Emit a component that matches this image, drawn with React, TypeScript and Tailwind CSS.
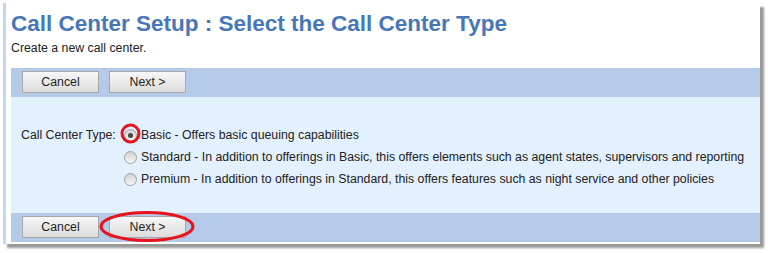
import React from "react";

const font = { fontFamily: '"Liberation Sans", Arial, sans-serif' };

function Btn({ label }: { label: string }) {
  return (
    <button className="w-[77px] h-[22px] border border-[#a7a7a7] bg-gradient-to-b from-[#f7f7f7] to-[#dcdcdc] text-[12.3px] text-[#1e1e1e] leading-none flex items-center justify-center">
      {label}
    </button>
  );
}

function Bar() {
  return (
    <div className="h-[29px] bg-[#b5c9e9] pt-[3px] pl-[11px] flex gap-[10px] items-start">
      <Btn label="Cancel" />
      <Btn label="Next >" />
    </div>
  );
}

function Radio({ checked }: { checked?: boolean }) {
  return (
    <span className="relative w-[13px] h-[13px] rounded-full border border-[#a2a2a2] bg-gradient-to-b from-[#d2d2d2] to-[#f7f7f7] flex items-center justify-center shrink-0">
      {checked && <span className="w-[5px] h-[5px] rounded-full bg-[#444]" />}
    </span>
  );
}

function Option({ checked, text }: { checked?: boolean; text: string }) {
  return (
    <div className="h-[22px] flex items-center">
      <Radio checked={checked} />
      <span className="ml-[4px] text-[12.3px] text-[#222] whitespace-nowrap">{text}</span>
    </div>
  );
}

export default function App() {
  return (
    <div className="w-[768px] h-[253px] bg-white relative overflow-hidden" style={font}>
      <div className="ml-[3px] mt-[3px] w-[757px] border-l-[3px] border-[#c6d6ee] bg-white pl-[5px] pt-[8px] pb-[2px] shadow-[4px_4px_2px_rgba(0,0,0,0.4)]">
        <h1 className="text-[22.5px] leading-[26px] font-bold text-[#4777b6]">
          Call Center Setup : Select the Call Center Type
        </h1>
        <p className="mt-[4px] text-[12.3px] leading-[14px] text-[#222]">Create a new call center.</p>
        <div className="mt-[13px]">
          <Bar />
          <div className="bg-[#e3f0fd] h-[116px] pt-[27px] pl-[10px] flex">
            <div className="w-[103px] h-[22px] flex items-center text-[12.3px] text-[#222]">Call Center Type:</div>
            <div className="flex flex-col">
              <Option checked text="Basic - Offers basic queuing capabilities" />
              <Option text="Standard - In addition to offerings in Basic, this offers elements such as agent states, supervisors and reporting" />
              <Option text="Premium - In addition to offerings in Standard, this offers features such as night service and other policies" />
            </div>
          </div>
          <Bar />
        </div>
      </div>
      <svg className="absolute left-0 top-0 pointer-events-none" width="768" height="253">
        <circle cx="130.5" cy="133.5" r="8.5" fill="none" stroke="#e8121c" strokeWidth="3" />
        <ellipse cx="147" cy="226.5" rx="46" ry="14" fill="none" stroke="#e8121c" strokeWidth="3" />
      </svg>
    </div>
  );
}
